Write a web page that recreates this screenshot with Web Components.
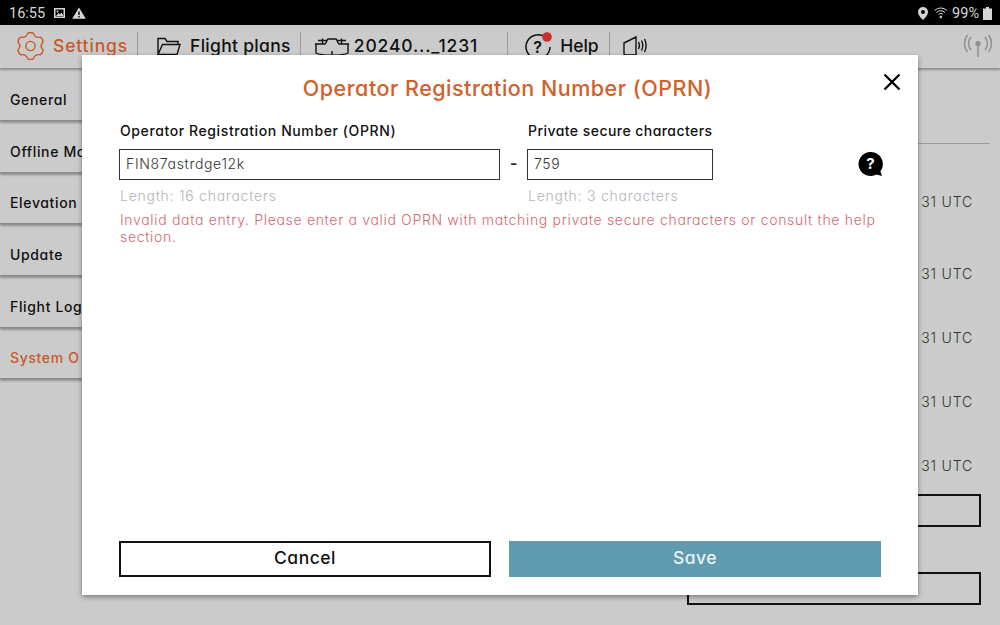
<!DOCTYPE html>
<html lang="en">
<head>
<meta charset="utf-8">
<title>OPRN</title>
<style>
  html, body { margin: 0; height: 100%; }
  body { width: 1000px; height: 625px; overflow: hidden; background: #cbcbcb; font-family: Inter, "Liberation Sans", sans-serif; font-feature-settings: "cv11"; }
</style>
</head>
<body>
<app-shell>
  <status-bar slot="status"></status-bar>
  <top-bar slot="top"></top-bar>
  <side-menu slot="side">
    <side-item>General</side-item>
    <side-item>Offline Mo</side-item>
    <side-item>Elevation</side-item>
    <side-item>Update</side-item>
    <side-item>Flight Logs</side-item>
    <side-item active>System O</side-item>
  </side-menu>
  <back-panel slot="main"></back-panel>
  <oprn-dialog slot="dialog"></oprn-dialog>
</app-shell>

<script>
class AppShell extends HTMLElement {
  constructor() {
    super();
    this.attachShadow({ mode: "open" }).innerHTML = `
      <style>
        :host { display: grid; position: relative; width: 1000px; height: 625px; grid-template-columns: 120px 1fr; grid-template-rows: 25px 43px 1fr; overflow: hidden; }
        .status, .top { grid-column: 1 / 3; }
      </style>
      <div class="status"><slot name="status"></slot></div>
      <div class="top"><slot name="top"></slot></div>
      <div><slot name="side"></slot></div>
      <div><slot name="main"></slot></div>
      <slot name="dialog"></slot>
    `;
  }
}

class StatusBar extends HTMLElement {
  constructor() {
    super();
    this.attachShadow({ mode: "open" }).innerHTML = `
      <style>
        :host { display: flex; align-items: center; height: 25px; background: #000; color: #d6d6d6; font: 14.5px Roboto, sans-serif; padding: 1px 8px 0 9px; box-sizing: border-box; }
        svg { display: block; fill: #d6d6d6; }
        .time { margin-right: 8px; }
        .gap { flex: 1; }
      </style>
      <span class="time">16:55</span>
      <svg width="13" height="12" viewBox="0 0 13 12" style="margin-right:6px"><path fill-rule="evenodd" d="M1 1h11v10H1zM2.500 2.500v7h8v-7z"/><path d="M3 9l2.500-3 1.500 1.500 1.500-2 2 3.500z"/><circle cx="4.500" cy="4.500" r="1"/></svg>
      <svg width="14" height="12" viewBox="0 0 14 12"><path fill-rule="evenodd" d="M7 0.500L13.800 11.800H.2zM6.300 4.500v3.500h1.400V4.500zM6.300 9v1.400h1.400V9z"/></svg>
      <span class="gap"></span>
      <svg width="10" height="13" viewBox="0 0 10 13" style="margin-right:6px"><path fill-rule="evenodd" d="M5 0a5 5 0 0 1 5 5c0 3-3 6-5 8-2-2-5-5-5-8a5 5 0 0 1 5-5zM5 3a2 2 0 1 0 0 4 2 2 0 0 0 0-4z"/></svg>
      <svg width="14" height="12" viewBox="0 0 14 12" style="margin-right:4px;fill:none;stroke:#d6d6d6;stroke-width:1"><path d="M.5 3.500a9 9 0 0 1 12.500 0M2.500 5.500a6 6 0 0 1 8.500 0M4.500 7.500a3 3 0 0 1 4.500 0"/><circle cx="6.800" cy="10" r=".9" fill="#d6d6d6"/></svg>
      <span>99%</span>
      <svg width="9" height="13" viewBox="0 0 9 13" style="margin-left:4px"><path d="M3 0h3v1.500h3V13H0V1.500h3z"/></svg>
    `;
  }
}

// six flat teeth with rounded valleys, same outline as the settings icon in the app
function gearPath(cx, cy) {
  let d = "";
  const pt = (r, deg) => {
    const a = deg * Math.PI / 180;
    return (cx + r * Math.cos(a)).toFixed(2) + " " + (cy + r * Math.sin(a)).toFixed(2);
  };
  for (let i = 0; i < 6; i++) {
    const a = i * 60 - 90;
    d += (i ? "Q" + pt(8.8, a - 30) + " " : "M") + pt(13.2, a - 12);
    d += "Q" + pt(14.2, a) + " " + pt(13.2, a + 12);
  }
  return d + "Q" + pt(8.8, -120) + " " + pt(13.2, -102) + "Z";
}

class TopBar extends HTMLElement {
  constructor() {
    super();
    this.attachShadow({ mode: "open" }).innerHTML = `
      <style>
        :host { display: flex; align-items: center; position: relative; z-index: 1; height: 43px; background: #cbcbcb; box-shadow: 0 2px 2px #8c8c8c; color: #111; font-size: 17.500px; font-weight: 500; padding: 0 0 2px 17px; box-sizing: border-box; }
        svg { display: block; fill: none; stroke: #111; stroke-width: 1.400; flex: none; }
        span { white-space: nowrap; }
        .sep { width: 1px; height: 28px; background: #9a9a9a; flex: none; align-self: flex-start; margin-top: 7px; }
        .orange { color: #c8592a; letter-spacing: .85px; }
        .wide { letter-spacing: .85px; }
        .plans { letter-spacing: .3px; }
        .gap { flex: 1; }
      </style>
      <svg style="stroke:#c8592a" width="27" height="28" viewBox="0 0 27 28"><circle cx="13.500" cy="14" r="4.600"/><path d="${gearPath(13.5, 14)}" stroke-linejoin="round"/></svg>
      <span class="orange" style="margin-left:9px">Settings</span>
      <span class="sep" style="margin-left:9px"></span>
      <svg style="margin-left:19px" width="24" height="20" viewBox="0 0 24 20"><path d="M1 18.500V2.500h7l2 3h11v3M1 18.500h19l3-10H5.500L1 18.500z"/></svg>
      <span class="plans" style="margin-left:9px">Flight plans</span>
      <span class="sep" style="margin-left:9px"></span>
      <svg style="margin-left:13px;overflow:visible" width="36" height="22" viewBox="0 0 36 22"><path d="M1 9h10c1 0 1-3 3-5h8c2 2 2 5 3 5h10M2 9v9c5 3 27 3 32 0V9M4 5.500h9M23 5.500h9M8.500 3.500v5M27.500 3.500v5M18 16v5"/></svg>
      <span class="wide" style="margin-left:4px">20240..._1231</span>
      <span class="sep" style="margin-left:29px"></span>
      <svg style="margin-left:16px;overflow:visible" width="28" height="26" viewBox="0 0 28 26"><path d="M21 4a12 12 0 1 0 5 10" stroke-width="1.500"/><text x="13.500" y="20" text-anchor="middle" font-family="Inter, sans-serif" font-size="16" font-weight="600" fill="#111" stroke="none">?</text><circle cx="23" cy="4" r="4.800" fill="#c9302c" stroke="none"/></svg>
      <span style="margin-left:8px">Help</span>
      <span class="sep" style="margin-left:10px"></span>
      <svg style="margin-left:13px" width="24" height="21" viewBox="0 0 24 21"><path d="M1 8L13 2V20H2.500Q1 20 1 18.500ZM15.500 7c1 2 1 5 0 7M18.500 5.500c1.500 3 1.500 7 0 10M21.500 4c2 4 2 9 0 13"/></svg>
      <span class="gap"></span>
      <svg style="margin-right:7px;stroke:#8f8f8f" width="30" height="24" viewBox="0 0 30 24"><path d="M8 3c-3 4-3 9 0 13M4.500 1c-4 5-4 12 0 17M22 3c3 4 3 9 0 13M25.500 1c4 5 4 12 0 17M15 11v12" stroke-width="1.500"/><circle cx="15" cy="9.500" r="2.600" fill="#8f8f8f" stroke="none"/></svg>
    `;
  }
}

class SideMenu extends HTMLElement {
  constructor() {
    super();
    this.attachShadow({ mode: "open" }).innerHTML = `
      <style>:host { display: flex; flex-direction: column; padding-top: 3px; }</style>
      <slot></slot>
    `;
  }
}

class SideItem extends HTMLElement {
  constructor() {
    super();
    this.attachShadow({ mode: "open" }).innerHTML = `
      <style>
        :host { display: block; height: 50px; padding: 20px 0 0 10px; box-sizing: border-box; margin-bottom: 1.700px; border-bottom: 1px solid #8a8a8a; box-shadow: 0 2px 2px #8f8f8f; color: #111; font-size: 14px; font-weight: 500; letter-spacing: .65px; line-height: 18px; white-space: nowrap; }
        :host([active]) { color: #c8592a; }
      </style>
      <slot></slot>
    `;
  }
}

class BackPanel extends HTMLElement {
  constructor() {
    super();
    this.attachShadow({ mode: "open" }).innerHTML = `
      <style>
        :host { display: flex; flex-direction: column; color: #333; font: 300 14px/24px Inter, sans-serif; letter-spacing: .8px; padding-top: 75px; }
        .rule { height: 1px; background: #9c9c9c; margin-right: 10px; }
        .row { height: 24px; text-align: right; padding-right: 27px; margin-top: 40px; }
        .row.first { margin-top: 46px; }
        .row.wide { margin-top: 48px; }
        .box { width: 290px; height: 29px; border: 2px solid #111; align-self: flex-end; margin-right: 19px; }
      </style>
      <div class="rule"></div>
      <div class="row first">31 UTC</div>
      <div class="row wide">31 UTC</div>
      <div class="row">31 UTC</div>
      <div class="row">31 UTC</div>
      <div class="row">31 UTC</div>
      <div class="box" style="margin-top:16px"></div>
      <div class="box" style="margin-top:45px"></div>
    `;
  }
}

class FormField extends HTMLElement {
  constructor() {
    super();
    this.attachShadow({ mode: "open" }).innerHTML = `
      <style>
        :host { display: block; }
        .label { padding-left: 1px; font-size: 14px; font-weight: 500; letter-spacing: var(--label-spacing, .6px); line-height: 18px; color: #111; white-space: nowrap; }
        .input { height: 29px; margin-top: 9px; border: 1px solid #333; padding-left: 6px; font-size: 14px; font-weight: 300; letter-spacing: .67px; line-height: 27px; color: #333; }
        .hint { margin-top: 7px; padding-left: 1px; font-size: 14px; font-weight: 300; letter-spacing: .75px; line-height: 18px; color: #b4b4b4; white-space: nowrap; }
      </style>
      <div class="label">${this.getAttribute("label") || ""}</div>
      <div class="input">${this.getAttribute("value") || ""}</div>
      <div class="hint">${this.getAttribute("hint") || ""}</div>
    `;
  }
}

class DialogButton extends HTMLElement {
  constructor() {
    super();
    this.attachShadow({ mode: "open" }).innerHTML = `
      <style>
        :host { display: flex; align-items: center; justify-content: center; height: 36px; padding-bottom: 4px; box-sizing: border-box; border: 2px solid #111; background: #fff; color: #111; font-size: 17.500px; font-weight: 500; letter-spacing: .5px; }
        :host([primary]) { border: 0; background: #5f9aae; color: #eaf2f4; }
      </style>
      <slot></slot>
    `;
  }
}

class OprnDialog extends HTMLElement {
  constructor() {
    super();
    this.attachShadow({ mode: "open" }).innerHTML = `
      <style>
        :host { position: absolute; left: 82px; top: 55px; width: 836px; height: 540px; box-sizing: border-box; padding: 0 37px 18px; display: flex; flex-direction: column; background: #fff; box-shadow: 0 2px 5px rgba(0,0,0,.4); z-index: 2; }
        h1 { margin: 20px 0 0; padding-left: 15px; font-size: 21.500px; line-height: 26px; font-weight: 500; letter-spacing: .5px; color: #d2602a; text-align: center; }
        .close { position: absolute; top: 18px; right: 17px; display: block; }
        .fields { display: grid; grid-template-columns: 381px 186px 1fr; column-gap: 27px; margin-top: 21px; }
        .dash { position: absolute; left: 428px; top: 98px; font-size: 16px; font-weight: 600; color: #222; }
        .help { position: absolute; left: 776px; top: 96px; display: block; }
        .error { margin: 6px 0 0 1px; width: 762px; font-size: 14px; font-weight: 300; letter-spacing: .68px; line-height: 17px; color: #d06a70; }
        .gap { flex: 1; }
        .actions { display: grid; grid-template-columns: 372px 372px; column-gap: 18px; }
      </style>
      <h1>Operator Registration Number (OPRN)</h1>
      <svg class="close" width="18" height="18" viewBox="0 0 18 18"><path d="M1.500 1.500l15 15M16.500 1.500l-15 15" stroke="#000" stroke-width="2.300"/></svg>
      <div class="fields">
        <form-field label="Operator Registration Number (OPRN)" value="FIN87astrdge12k" hint="Length: 16 characters"></form-field>
        <form-field style="--label-spacing:.45px" label="Private secure characters" value="759" hint="Length: 3 characters"></form-field>
      </div>
      <span class="dash">-</span>
      <svg class="help" width="26" height="26" viewBox="0 0 26 26"><path d="M12.500 1a12 12 0 1 0 6 22.400l5.500 1.600-1.600-4.800A12 12 0 0 0 12.500 1z" fill="#000"/><text x="12.500" y="18" text-anchor="middle" font-family="Inter, sans-serif" font-size="15" font-weight="700" fill="#fff">?</text></svg>
      <p class="error">Invalid data entry. Please enter a valid OPRN with matching private secure characters or consult the help section.</p>
      <div class="gap"></div>
      <div class="actions">
        <dialog-button>Cancel</dialog-button>
        <dialog-button primary>Save</dialog-button>
      </div>
    `;
  }
}

customElements.define("app-shell", AppShell);
customElements.define("status-bar", StatusBar);
customElements.define("top-bar", TopBar);
customElements.define("side-menu", SideMenu);
customElements.define("side-item", SideItem);
customElements.define("back-panel", BackPanel);
customElements.define("form-field", FormField);
customElements.define("dialog-button", DialogButton);
customElements.define("oprn-dialog", OprnDialog);
</script>
</body>
</html>
